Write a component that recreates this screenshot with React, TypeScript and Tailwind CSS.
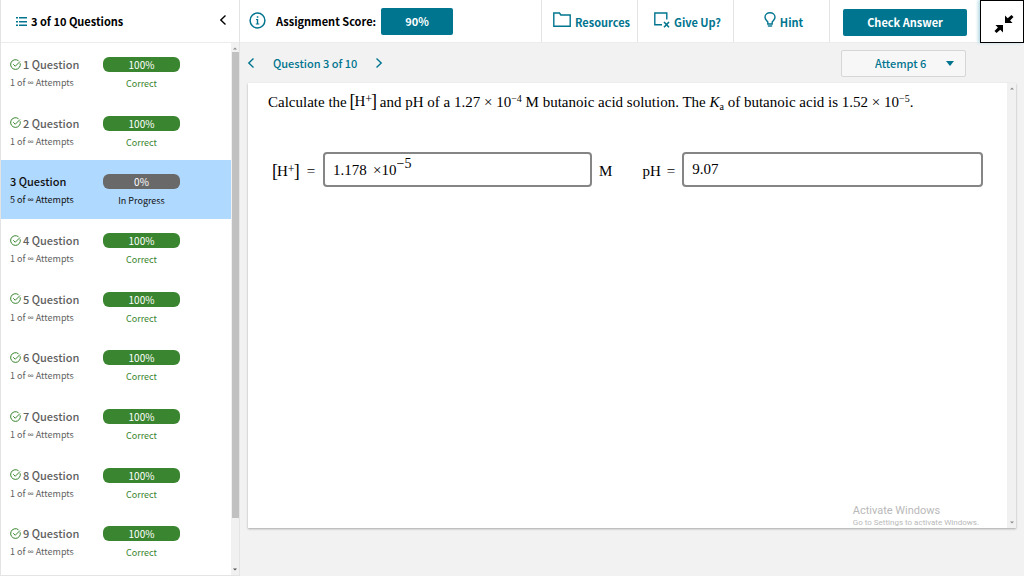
import { useState, type ReactNode } from "react";

type Question = { id: number; attempts: number; score: string; status: string; done: boolean };

const questions: Question[] = [1, 2, 3, 4, 5, 6, 7, 8, 9].map((id) =>
  id === 3
    ? { id, attempts: 5, score: "0%", status: "In Progress", done: false }
    : { id, attempts: 1, score: "100%", status: "Correct", done: true },
);

function ListIcon() {
  return (
    <svg width="11" height="11" viewBox="0 0 11 11" fill="#00758f" aria-hidden="true">
      <path d="M0 1h2v1H0zM0 5h2v1H0zM0 9h2v1H0zM3 1h8v1H3zM3 5h8v1H3zM3 9h8v1H3z" />
      <path d="M0 2h2v.4H0zM0 6h2v.4H0zM0 8.600h2V9H0zM3 2h8v.4H3zM3 6h8v.4H3zM3 8.600h8V9H3z" />
    </svg>
  );
}

function CheckCircle() {
  return (
    <svg width="11" height="11" viewBox="0 0 22 22" fill="none" stroke="#3a852f" strokeWidth="2" aria-hidden="true">
      <path d="M20.300 8.500A9.700 9.700 0 1 1 17 3.500" />
      <path d="M6.500 10.500l4 4L20 5" />
    </svg>
  );
}

function InfoIcon() {
  return (
    <svg width="17" height="17" viewBox="0 0 17 17" aria-hidden="true">
      <circle cx="8.5" cy="8.5" r="7.4" fill="none" stroke="#00758f" strokeWidth="1.5" />
      <path d="M7.800 4.200h1.500v1.500H7.800zM7 7h2.200v4.800h-1.400V8H7zM6.800 11.400h3.500v1H6.800z" fill="#00758f" />
    </svg>
  );
}

function Chevron({ dir, className }: { dir: "left" | "right"; className: string }) {
  return (
    <svg width="8" height="12" viewBox="0 0 8 12" fill="none" stroke="currentColor" className={className} aria-hidden="true">
      <path d={dir === "left" ? "M6.500 1.500L1.800 6l4.700 4.500" : "M1.500 1.500L6.200 6l-4.700 4.500"} strokeWidth="1.4" />
    </svg>
  );
}

function FolderIcon() {
  return (
    <svg width="18" height="16" viewBox="0 0 18 16" fill="none" stroke="#00758f" strokeWidth="1.4" aria-hidden="true">
      <path d="M.8 14.200V1h5.700l1.300 2h9.400v11.200z" />
    </svg>
  );
}

function GiveUpIcon() {
  return (
    <svg width="16" height="16" viewBox="0 0 16 16" fill="none" stroke="#00758f" aria-hidden="true">
      <path d="M8 12.700H.8V1h12v6.500" strokeWidth="1.4" />
      <path d="M10 10l5 5.200M15 10l-5 5.200" strokeWidth="1.6" />
    </svg>
  );
}

function BulbIcon() {
  return (
    <svg width="12" height="16" viewBox="0 0 12 16" fill="none" stroke="#00758f" strokeWidth="1.4" aria-hidden="true">
      <path d="M3.800 12V10C3 8.600 1 7.600 1 5.300A4.800 4.300 0 0 1 11 5.300C11 7.600 9 8.600 8.200 10V12z" />
      <path d="M3.800 14h4.400" />
    </svg>
  );
}

function CollapseIcon() {
  return (
    <svg width="20" height="20" viewBox="0 0 20 20" aria-hidden="true">
      <g fill="#000">
        <path d="M11 1.500V9h7.500l-2.400-2.400L19.500 3 17.500.900 13.700 4.200z" />
        <path d="M9 18.500V11H1.500l2.400 2.400L.5 17l2 2.100 3.800-3.300z" />
      </g>
    </svg>
  );
}

function ScrollArrow({ up, color }: { up?: boolean; color: string }) {
  return (
    <svg width="4" height="3" viewBox="0 0 4 3" aria-hidden="true">
      <path d={up ? "M0 2.500L2 .5 4 2.500z" : "M0 .5L2 2.500 4 .5z"} fill={color} />
    </svg>
  );
}

function Hydrogen() {
  return (
    <span className="inline-flex items-center whitespace-nowrap">
      <span className="-mx-px text-[18px] leading-[18px]">[</span>
      <span>
        H<span className="align-[3px] text-[12px] leading-none">+</span>
      </span>
      <span className="-mx-px text-[18px] leading-[18px]">]</span>
    </span>
  );
}

function ActionButton({ icon, children }: { icon: ReactNode; children: ReactNode }) {
  return (
    <button
      type="button"
      className="flex w-24 items-center justify-center gap-1 border-l border-[#e2e2e2] pl-1 text-[11px] font-bold text-[#00758f]"
    >
      <span className="pb-0.5">{icon}</span>
      <span className="pt-0.5">{children}</span>
    </button>
  );
}

function Sidebar() {
  return (
    <aside className="flex w-60 shrink-0 flex-col border-x border-b border-[#e4e4e4] bg-white">
      <header className="flex h-[43px] shrink-0 items-center border-b border-[#ececec] pr-3 pl-[15px]">
        <ListIcon />
        <h1 className="ml-1 text-[11px] font-bold">3 of 10 Questions</h1>
        <button type="button" aria-label="Collapse question list" className="ml-auto pb-0.5">
          <Chevron dir="left" className="text-black" />
        </button>
      </header>
      <div className="flex min-h-0 flex-1">
        <ol className="flex min-h-0 flex-1 flex-col pb-1">
          {questions.map((q) => (
            <li key={q.id} className={q.done ? "flex-1" : "flex-1 bg-[#b0d9ff]"}>
              <a
                href={`#question-${q.id}`}
                className={`flex h-full items-start pt-[13px] pl-[9px] ${q.done ? "text-[#5f5f5f]" : "text-[#111]"}`}
              >
                <span className="w-[93px]">
                  <span className="flex h-4 items-center gap-0.5 text-[11px] font-medium">
                    {q.done && <CheckCircle />}
                    {q.id} Question
                  </span>
                  <span className="mt-[5px] block text-[9px] leading-3">
                    {q.attempts} of <span className="font-['Open_Sans',sans-serif] text-[9px]">∞</span> Attempts
                  </span>
                </span>
                <span className="w-[77px] pt-px text-center">
                  <span
                    className={`block h-[15px] rounded-md text-[10px] leading-[15px] text-white ${
                      q.done ? "bg-[#3a852f]" : "bg-[#696969]"
                    }`}
                  >
                    {q.score}
                  </span>
                  <span className={`mt-1.5 block text-[9px] leading-3 ${q.done ? "text-[#3a852f]" : ""}`}>
                    {q.status}
                  </span>
                </span>
              </a>
            </li>
          ))}
        </ol>
        <div className="flex w-2 flex-col items-center justify-between bg-[#f1f1f1] py-1" aria-hidden="true">
          <ScrollArrow up color="#8a8a8a" />
          <div className="mt-0.5 mb-auto h-[89%] w-[7px] bg-[#c1c1c1]" />
          <ScrollArrow color="#505050" />
        </div>
      </div>
    </aside>
  );
}

export default function App() {
  const [mantissa, setMantissa] = useState("1.178");
  const [exponent, setExponent] = useState("−5");
  const [ph, setPh] = useState("9.07");

  return (
    <div className="flex h-screen overflow-hidden bg-[#f2f2f2] font-['Noto_Sans_CJK_SC','Noto_Sans',sans-serif] leading-4 text-black">
      <Sidebar />
      <div className="flex min-w-0 flex-1 flex-col">
        <header className="flex h-[43px] shrink-0 border-b border-[#ececec] bg-white">
          <div className="flex items-center pl-[9px]">
            <button type="button" aria-label="Score information" className="pb-0.5">
              <InfoIcon />
            </button>
            <span className="ml-2.5 text-[11px] font-bold">Assignment Score:</span>
            <span className="ml-[5px] flex h-[27px] w-[72px] items-center justify-center rounded-xs bg-[#00758f] text-[11px] font-bold text-white">
              90%
            </span>
          </div>
          <nav className="ml-auto flex">
            <ActionButton icon={<FolderIcon />}>Resources</ActionButton>
            <ActionButton icon={<GiveUpIcon />}>Give Up?</ActionButton>
            <ActionButton icon={<BulbIcon />}>Hint</ActionButton>
          </nav>
          <div className="flex items-center border-l border-[#e2e2e2] px-[13px] pt-0.5">
            <button
              type="button"
              className="h-[27px] w-[124px] rounded-xs bg-[#00758f] text-[11px] font-bold text-white"
            >
              Check Answer
            </button>
          </div>
          <button
            type="button"
            aria-label="Exit full screen"
            className="flex h-[43px] w-[44px] items-center justify-center border border-black bg-white pt-1 pl-1 shadow-[-2px_0_3px_#b8dce4]"
          >
            <CollapseIcon />
          </button>
        </header>

        <div className="flex h-10 shrink-0 items-center justify-between pr-[58px] pl-[7px]">
          <div className="flex items-center text-[11px] font-medium text-[#00758f]">
            <button type="button" aria-label="Previous question">
              <Chevron dir="left" className="" />
            </button>
            <span className="mx-[18px]">Question 3 of 10</span>
            <button type="button" aria-label="Next question">
              <Chevron dir="right" className="" />
            </button>
          </div>
          <div className="relative">
            <select
              aria-label="Attempt"
              defaultValue="6"
              className="h-[27px] w-[125px] appearance-none rounded-xs border border-[#d6d6d6] bg-[#f7f7f7] pl-[33px] text-[11px] font-medium text-[#00758f]"
            >
              <option value="6">Attempt 6</option>
            </select>
            <svg width="8" height="5" viewBox="0 0 8 5" className="pointer-events-none absolute top-[11px] right-3" aria-hidden="true">
              <path d="M0 0h8L4 5z" fill="#00758f" />
            </svg>
          </div>
        </div>

        <div className="mr-2 mb-12 ml-2 flex min-h-0 flex-1 bg-white shadow-[0_1px_2px_#a8a8a8]">
          <main className="relative min-w-0 flex-1 pt-2 pr-6 pl-5 font-['Liberation_Serif',serif] text-[15px] leading-5">
            <p>
              Calculate the <Hydrogen /> and pH of a 1.27 × 10
              <sup className="text-[10px] leading-none">−4</sup> M butanoic acid solution. The <i>K</i>
              <sub className="text-[10px] leading-none">a</sub> of butanoic acid is 1.52 × 10
              <sup className="text-[10px] leading-none">−5</sup>.
            </p>
            <form className="mt-10 flex items-center pl-[5px]">
              <label htmlFor="mantissa" className="flex gap-2 pt-0.5 whitespace-nowrap">
                <Hydrogen /> <span>=</span>
              </label>
              <div className="ml-2 flex h-[35px] w-[269px] items-center rounded-sm border-2 border-[#858585] px-2">
                <input
                  id="mantissa"
                  value={mantissa}
                  onChange={(e) => setMantissa(e.target.value)}
                  className="w-10 outline-none"
                />
                <span>×10</span>
                <input
                  aria-label="Exponent"
                  value={exponent}
                  onChange={(e) => setExponent(e.target.value)}
                  className="mb-3 h-4 w-8 text-[14px] outline-none"
                />
              </div>
              <span className="ml-[7px] pt-0.5">M</span>
              <label htmlFor="ph" className="ml-[30px] flex gap-1.5 pt-0.5 whitespace-nowrap">
                <span>pH</span> <span>=</span>
              </label>
              <input
                id="ph"
                value={ph}
                onChange={(e) => setPh(e.target.value)}
                className="ml-[7px] h-[35px] min-w-0 flex-1 rounded-sm border-2 border-[#858585] px-2 outline-none"
              />
            </form>
            <div className="pointer-events-none absolute right-7 bottom-0 font-['Roboto',sans-serif] text-[#b9b9b9]">
              <p className="text-[11px] leading-3">Activate Windows</p>
              <p className="text-[8px] leading-[11px]">Go to Settings to activate Windows.</p>
            </div>
          </main>
          <div className="flex w-[9px] flex-col items-center justify-between bg-[#f1f1f1] py-1" aria-hidden="true">
            <ScrollArrow up color="#8a8a8a" />
            <ScrollArrow color="#8a8a8a" />
          </div>
        </div>
      </div>
    </div>
  );
}
